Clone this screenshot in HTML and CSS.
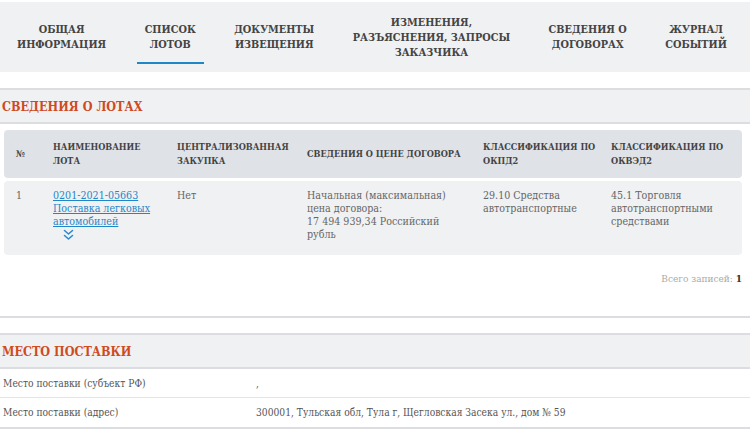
FILE: index.html
```html
<!DOCTYPE html>
<html lang="ru">
<head>
    <meta charset="UTF-8">
    <meta name="viewport" content="width=device-width, initial-scale=1.0">
    <title>Сведения о лотах</title>
    <link rel="stylesheet" href="styles.css">
</head>
<body>
    <nav class="tabs">
        <a class="tab" href="#">ОБЩАЯ<br>ИНФОРМАЦИЯ</a>
        <a class="tab active" href="#">СПИСОК<br>ЛОТОВ</a>
        <a class="tab" href="#">ДОКУМЕНТЫ<br>ИЗВЕЩЕНИЯ</a>
        <a class="tab" href="#">ИЗМЕНЕНИЯ,<br>РАЗЪЯСНЕНИЯ, ЗАПРОСЫ<br>ЗАКАЗЧИКА</a>
        <a class="tab" href="#">СВЕДЕНИЯ О<br>ДОГОВОРАХ</a>
        <a class="tab" href="#">ЖУРНАЛ<br>СОБЫТИЙ</a>
    </nav>

    <section class="block lots">
        <h2 class="block-title">СВЕДЕНИЯ О ЛОТАХ</h2>
        <div class="lots-table">
            <div class="row head">
                <div class="cell">№</div>
                <div class="cell">НАИМЕНОВАНИЕ<br>ЛОТА</div>
                <div class="cell">ЦЕНТРАЛИЗОВАННАЯ<br>ЗАКУПКА</div>
                <div class="cell">СВЕДЕНИЯ О ЦЕНЕ ДОГОВОРА</div>
                <div class="cell">КЛАССИФИКАЦИЯ ПО<br>ОКПД2</div>
                <div class="cell">КЛАССИФИКАЦИЯ ПО<br>ОКВЭД2</div>
            </div>
            <div class="row body">
                <div class="cell">1</div>
                <div class="cell">
                    <a class="lot-link" href="#">0201-2021-05663<br>Поставка легковых<br>автомобилей</a>
                    <div class="expand">
                        <svg width="11" height="12" viewBox="0 0 11 12" fill="none" stroke="#2b8ad0" stroke-width="1.6" stroke-linecap="round" stroke-linejoin="round">
                            <polyline points="1.5,1.5 5.5,5 9.5,1.5"/>
                            <polyline points="1.5,6.5 5.5,10 9.5,6.5"/>
                        </svg>
                    </div>
                </div>
                <div class="cell">Нет</div>
                <div class="cell">Начальная (максимальная)<br>цена договора:<br>17 494 939,34 Российский<br>рубль</div>
                <div class="cell">29.10 Средства<br>автотранспортные</div>
                <div class="cell">45.1 Торговля<br>автотранспортными<br>средствами</div>
            </div>
        </div>
        <div class="total">Всего записей: <b>1</b></div>
    </section>

    <section class="block place">
        <h2 class="block-title">МЕСТО ПОСТАВКИ</h2>
        <div class="info-row">
            <div class="info-label">Место поставки (субъект РФ)</div>
            <div class="info-value">,</div>
        </div>
        <div class="info-row">
            <div class="info-label">Место поставки (адрес)</div>
            <div class="info-value">300001, Тульская обл, Тула г, Щегловская Засека ул., дом № 59</div>
        </div>
    </section>
</body>
</html>
```

FILE: styles.css
```css
body {
    margin: 0;
    padding-top: 2px;
    font-family: "DejaVu Serif Condensed", "DejaVu Serif", serif;
    font-stretch: condensed;
    color: #555;
    background-color: #fff;
}
.tabs {
    display: flex;
    justify-content: space-between;
    height: 70px;
    padding: 0 15px 0 9px;
    background-color: #f0f1f3;
}
.tab {
    position: relative;
    display: flex;
    align-items: center;
    padding: 0 8px;
    text-align: center;
    font-size: 10.8px;
    font-weight: bold;
    line-height: 15px;
    color: #444;
    text-decoration: none;
}
.tab.active::after {
    content: "";
    position: absolute;
    left: 0;
    right: 0;
    bottom: 8px;
    height: 2px;
    background-color: #1f87c8;
}
.block {
    margin-top: 16px;
}
.block-title {
    margin: 0;
    height: 32px;
    line-height: 33px;
    padding-left: 2px;
    font-size: 12.5px;
    font-weight: bold;
    color: #cf4a1c;
    background-color: #f0f1f3;
    border-top: 2px solid #dcdde0;
    border-bottom: 2px solid #dcdde0;
}
.lots {
    border-bottom: 2px solid #dcdde0;
    padding-bottom: 32px;
}
.lots-table {
    margin: 6px 8px 0 4px;
}
.row {
    display: grid;
    grid-template-columns: 37px 124px 130px 176px 128px 143px;
    border-radius: 4px;
}
.row.head {
    height: 48px;
    align-items: center;
    background-color: #dfe2e7;
    font-size: 9.1px;
    font-weight: bold;
    line-height: 14px;
    color: #444;
    white-space: nowrap;
}
.row.body {
    margin-top: 3px;
    padding: 8px 0 14px;
    background-color: #f0f1f3;
    font-size: 10.6px;
    line-height: 13px;
    color: #666;
}
.cell {
    padding-left: 12px;
}
.lot-link {
    color: #1f87c8;
}
.expand {
    padding: 1px 0 0 10px;
    height: 12px;
}
.expand svg {
    display: block;
}
.total {
    margin: 18px 8px 0 0;
    text-align: right;
    font-size: 10px;
    color: #aaa;
}
.total b {
    color: #333;
}
.place {
    margin-top: 15px;
}
.info-row {
    display: flex;
    height: 28px;
    align-items: center;
    border-bottom: 1px solid #e3e4e6;
    font-size: 10.2px;
    color: #555;
}
.info-row:last-child {
    height: 29px;
    border-bottom: 2px solid #dcdde0;
}
.info-label {
    width: 253px;
    padding-left: 3px;
}
```
